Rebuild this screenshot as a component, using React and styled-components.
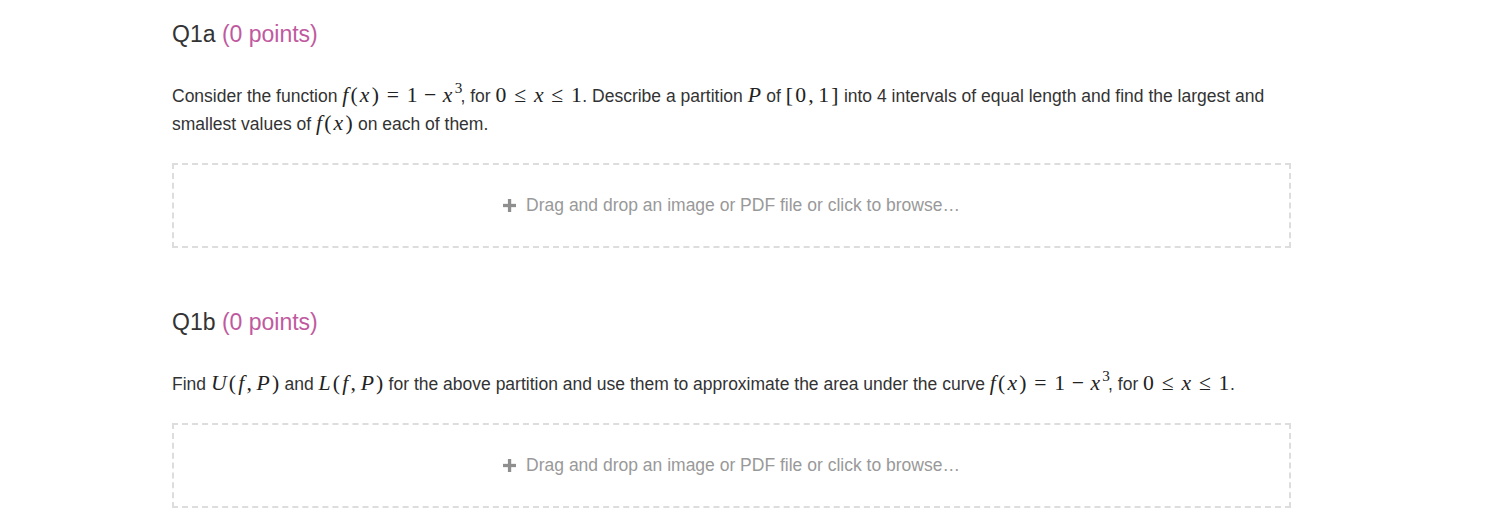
import React from "react";
import styled, { createGlobalStyle } from "styled-components";

const GlobalStyle = createGlobalStyle`
  html, body {
    margin: 0;
    padding: 0;
    background: #ffffff;
  }
  body {
    font-family: "Liberation Sans", Arial, sans-serif;
    color: #333333;
  }
`;

const Page = styled.div`
  display: flex;
  flex-direction: column;
  width: 1119px;
  margin-left: 172px;
  padding-top: 21px;
`;

const Question = styled.section`
  display: flex;
  flex-direction: column;
  margin-bottom: 61px;
`;

const Heading = styled.h2`
  margin: 0 0 35px 0;
  font-size: 23px;
  font-weight: 400;
  line-height: 26px;
  color: #333333;

  .points {
    color: #c05a9f;
  }
`;

const Prompt = styled.p`
  margin: 0 0 25px 0;
  font-size: 17.5px;
  line-height: 28px;
  color: #333333;
`;

// inline maths, set a little loose so it takes the room of the TeX fonts
const M = styled.span`
  font-family: "Liberation Serif", "Times New Roman", serif;
  font-size: 1.24em;
  line-height: 1;
  letter-spacing: 0.1em;
  margin-right: -0.08em;
  white-space: nowrap;
  color: #222222;

  i {
    font-style: italic;
  }

  .op {
    margin: 0 0.2em;
  }

  .rel {
    margin: 0 0.26em;
  }

  .comma {
    margin-right: 0.12em;
  }

  sup {
    font-size: 0.7em;
    line-height: 0;
    vertical-align: 0.6em;
    font-style: normal;
    letter-spacing: 0;
  }
`;

const DropZone = styled.div`
  display: flex;
  align-items: center;
  justify-content: center;
  gap: 10px;
  height: 81px;
  border: 2px dashed #dddddd;
  font-size: 17.5px;
  color: #999999;
  cursor: pointer;
`;

function PlusIcon() {
  return (
    <svg width="13" height="13" viewBox="0 0 13 13" aria-hidden="true">
      <rect x="4.9" y="0" width="3.3" height="13" fill="#8f8f8f" />
      <rect x="0" y="4.85" width="13" height="3.3" fill="#8f8f8f" />
    </svg>
  );
}

function Upload() {
  return (
    <DropZone>
      <PlusIcon />
      <span>Drag and drop an image or PDF file or click to browse…</span>
    </DropZone>
  );
}

function FofX() {
  return (
    <>
      <i>f</i>(<i>x</i>)
    </>
  );
}

function Cubic() {
  return (
    <M>
      <FofX />
      <span className="rel">=</span>1<span className="op">−</span>
      <i>x</i>
      <sup>3</sup>
    </M>
  );
}

function UnitRange() {
  return (
    <M>
      0<span className="rel">≤</span>
      <i>x</i>
      <span className="rel">≤</span>1
    </M>
  );
}

export default function App() {
  return (
    <>
      <GlobalStyle />
      <Page>
        <Question>
          <Heading>
            Q1a <span className="points">(0 points)</span>
          </Heading>
          <Prompt>
            Consider the function <Cubic />, for <UnitRange />. Describe a
            partition{" "}
            <M>
              <i>P</i>
            </M>{" "}
            of{" "}
            <M>
              [0<span className="comma">,</span>1]
            </M>{" "}
            into 4 intervals of equal length and find the largest and smallest
            values of{" "}
            <M>
              <FofX />
            </M>{" "}
            on each of them.
          </Prompt>
          <Upload />
        </Question>
        <Question>
          <Heading>
            Q1b <span className="points">(0 points)</span>
          </Heading>
          <Prompt>
            Find{" "}
            <M>
              <i>U</i>(<i>f</i>
              <span className="comma">,</span>
              <i>P</i>)
            </M>{" "}
            and{" "}
            <M>
              <i>L</i>(<i>f</i>
              <span className="comma">,</span>
              <i>P</i>)
            </M>{" "}
            for the above partition and use them to approximate the area under
            the curve <Cubic />, for <UnitRange />.
          </Prompt>
          <Upload />
        </Question>
      </Page>
    </>
  );
}
